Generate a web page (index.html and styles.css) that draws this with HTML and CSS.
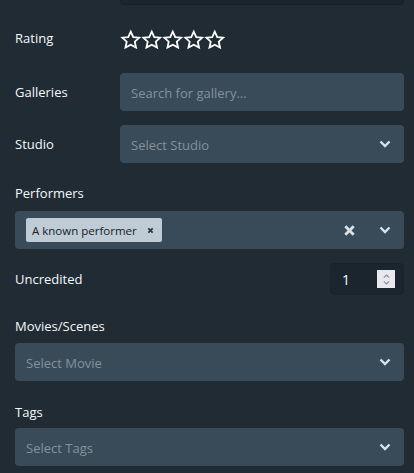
FILE: index.html
```html
<!DOCTYPE html>
<html>
<head>
<meta charset="utf-8">
<link rel="stylesheet" href="styles.css">
</head>
<body>
<div class="form">
  <div class="row top-row">
    <div class="label"></div>
    <div class="dark-input partial"></div>
  </div>

  <div class="row rating-row">
    <div class="label">Rating</div>
    <div class="stars">
      <svg class="star" viewBox="0 0 24 24"><path d="M12 2.6l2.8 6.1 6.6.7-4.9 4.5 1.4 6.6L12 17.2l-5.9 3.3 1.4-6.6-4.9-4.5 6.6-.7z"/></svg>
      <svg class="star" viewBox="0 0 24 24"><path d="M12 2.6l2.8 6.1 6.6.7-4.9 4.5 1.4 6.6L12 17.2l-5.9 3.3 1.4-6.6-4.9-4.5 6.6-.7z"/></svg>
      <svg class="star" viewBox="0 0 24 24"><path d="M12 2.6l2.8 6.1 6.6.7-4.9 4.5 1.4 6.6L12 17.2l-5.9 3.3 1.4-6.6-4.9-4.5 6.6-.7z"/></svg>
      <svg class="star" viewBox="0 0 24 24"><path d="M12 2.6l2.8 6.1 6.6.7-4.9 4.5 1.4 6.6L12 17.2l-5.9 3.3 1.4-6.6-4.9-4.5 6.6-.7z"/></svg>
      <svg class="star" viewBox="0 0 24 24"><path d="M12 2.6l2.8 6.1 6.6.7-4.9 4.5 1.4 6.6L12 17.2l-5.9 3.3 1.4-6.6-4.9-4.5 6.6-.7z"/></svg>
    </div>
  </div>

  <div class="row">
    <div class="label">Galleries</div>
    <div class="select"><span class="placeholder">Search for gallery...</span></div>
  </div>

  <div class="row">
    <div class="label">Studio</div>
    <div class="select">
      <span class="placeholder">Select Studio</span>
      <svg class="chev" viewBox="0 0 12 8"><path d="M1.5 1.5L6 6l4.5-4.5"/></svg>
    </div>
  </div>

  <div class="block performers">
    <div class="block-label">Performers</div>
    <div class="select">
      <span class="chip">A known performer<svg class="chip-x" viewBox="0 0 8 8"><path d="M1.5 1.5l5 5M6.5 1.5l-5 5"/></svg></span>
      <span class="spacer"></span>
      <svg class="clear" viewBox="0 0 10 10"><path d="M1.2 1.2l7.6 7.6M8.8 1.2l-7.6 7.6"/></svg>
      <svg class="chev" viewBox="0 0 12 8"><path d="M1.5 1.5L6 6l4.5-4.5"/></svg>
    </div>
  </div>

  <div class="row uncredited">
    <div class="label">Uncredited</div>
    <div class="number">
      <span class="num-value">1</span>
      <span class="spin">
        <svg viewBox="0 0 10 16"><path d="M2 6l3-3 3 3M2 10l3 3 3-3"/></svg>
      </span>
    </div>
  </div>

  <div class="block movies">
    <div class="block-label">Movies/Scenes</div>
    <div class="select">
      <span class="placeholder">Select Movie</span>
      <svg class="chev" viewBox="0 0 12 8"><path d="M1.5 1.5L6 6l4.5-4.5"/></svg>
    </div>
  </div>

  <div class="block tags">
    <div class="block-label">Tags</div>
    <div class="select">
      <span class="placeholder">Select Tags</span>
      <svg class="chev" viewBox="0 0 12 8"><path d="M1.5 1.5L6 6l4.5-4.5"/></svg>
    </div>
  </div>
</div>
</body>
</html>
```

FILE: styles.css
```css
html, body {
  margin: 0;
  padding: 0;
  background: #202b33;
  height: 100%;
  overflow: hidden;
}
body {
  font-family: "Open Sans", "Noto Sans", sans-serif;
  font-size: 13px;
  color: #f5f8fa;
}
.form {
  padding: 0 10px 0 15px;
}
.row {
  display: grid;
  grid-template-columns: 105px 1fr;
  align-items: center;
  height: 38px;
  margin-bottom: 14px;
}
.top-row {
  height: 5px;
  margin-bottom: 16px;
  align-items: end;
}
.partial {
  height: 38px;
  margin-top: -33px;
}
.dark-input {
  background: #1b252d;
  border: 1px solid #172026;
  border-radius: 4px;
  box-sizing: border-box;
}
.label {
  line-height: 20px;
}
.rating-row .label {
  margin-top: -4px;
}
.stars {
  display: flex;
}
.star {
  width: 21.5px;
  height: 22px;
  margin-right: -0.5px;
  fill: none;
  stroke: #ffffff;
  stroke-width: 2;
  stroke-linejoin: miter;
}
.select {
  height: 38px;
  background: #394b59;
  border-radius: 4px;
  display: flex;
  align-items: center;
  padding: 0 12px 0 11px;
  box-sizing: border-box;
}
.placeholder {
  flex: 1;
  color: #84919b;
  line-height: 20px;
  margin-top: 2px;
}
.chev {
  width: 12px;
  height: 8px;
  fill: none;
  stroke: #d8e1e8;
  stroke-width: 2.4;
  margin-left: auto;
  margin-right: 1px;
}
.block-label {
  line-height: 20px;
  margin-bottom: 8px;
}
.performers {
  margin-top: 20px;
  margin-bottom: 14px;
}
.chip {
  background: #bfccd6;
  color: #182026;
  border-radius: 2px;
  height: 24px;
  display: flex;
  align-items: center;
  padding: 0 8px 0 6px;
  font-size: 11.5px;
  white-space: nowrap;
}
.chip-x {
  width: 7px;
  height: 7px;
  fill: none;
  stroke: #2a3640;
  stroke-width: 2;
  margin-left: 10px;
}
.spacer {
  flex: 1;
}
.clear {
  width: 11px;
  height: 11px;
  fill: none;
  stroke: #d8e1e8;
  stroke-width: 2.6;
  margin-right: 24px;
}
.uncredited {
  height: 32px;
  grid-template-columns: 1fr 74px;
  margin-bottom: 0;
}
.number {
  height: 32px;
  background: #1b252d;
  border: 1px solid #19232a;
  border-radius: 4px;
  box-sizing: border-box;
  display: flex;
  align-items: center;
  padding: 0 8px 0 11px;
}
.num-value {
  flex: 1;
  font-size: 14px;
  color: #f5f8fa;
}
.spin {
  width: 18px;
  height: 18px;
  background: #e8e8ee;
  display: flex;
  align-items: center;
  justify-content: center;
}
.spin svg {
  width: 9px;
  height: 15px;
  fill: none;
  stroke: #8a8e96;
  stroke-width: 1.3;
}
.movies {
  margin-top: 21px;
}
.movies .block-label {
  margin-bottom: 7px;
}
.tags {
  margin-top: 21px;
}
.tags .block-label {
  margin-bottom: 6px;
}
```
